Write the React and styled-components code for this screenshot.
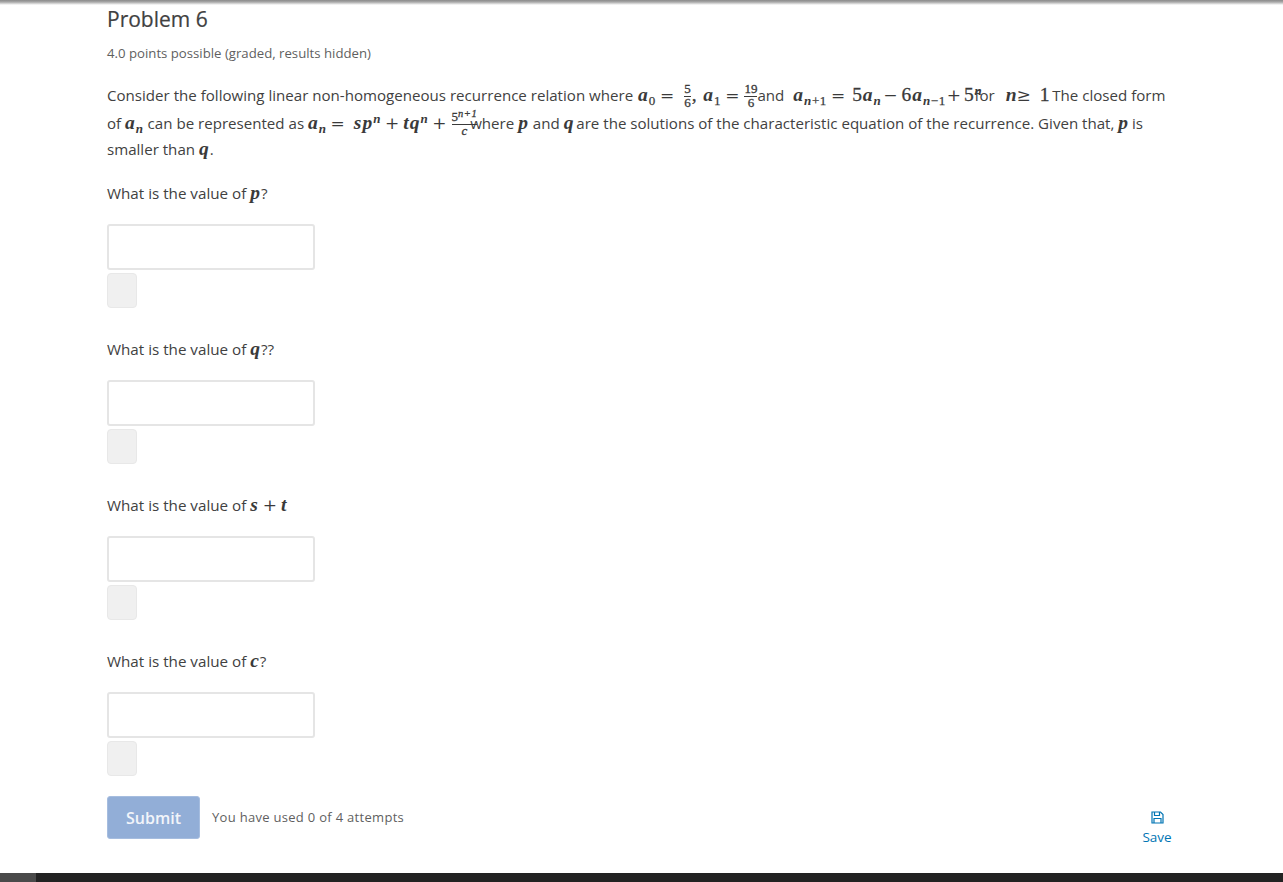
import React from "react";
import styled, { createGlobalStyle } from "styled-components";

const Global = createGlobalStyle`
  html, body { margin: 0; padding: 0; background: #fff; }
  body { font-family: "Open Sans", "Noto Sans", sans-serif; color: #414141; }
`;
const Page = styled.div`
  height: 882px; display: flex; flex-direction: column; overflow: hidden;
`;
const TopShadow = styled.div`
  height: 5px; flex: none;
  background: linear-gradient(#8a8a8a, #a8a8a8 40%, #fff);
`;
const Main = styled.main`
  flex: 1; padding: 0 0 0 107px; display: flex; flex-direction: column;
`;
const Title = styled.h3`
  margin: 0; font-size: 21px; line-height: 28px; font-weight: 500; color: #414141;
  -webkit-text-stroke: 0.2px #414141;
`;
const Meta = styled.div`
  margin-top: 11px; font-size: 13.2px; line-height: 18px; color: #5f5f5f;
`;
const Prose = styled.div`
  margin-top: 19px; font-size: 15.1px; color: #414141;
`;
const Line = styled.div`
  height: ${(p) => p.$h}px; line-height: ${(p) => p.$h}px; white-space: nowrap;
`;
const M = styled.span`
  font-family: "Liberation Serif", serif; font-size: 19.5px; font-style: italic;
  font-weight: 700; letter-spacing: 1px;
  color: #3a3a3a; margin: ${(p) => p.$m || "0"};
  sub, sup { font-size: 13px; line-height: 0; letter-spacing: 0.6px; }
  sub { vertical-align: -4px; }
  sup { vertical-align: 6px; }
`;
const Num1 = styled.span`
  font-family: "Liberation Serif", serif; font-size: 19.5px; font-weight: 400;
  -webkit-text-stroke: 0.3px #3a3a3a; letter-spacing: 0.8px;
  color: #3a3a3a; margin: ${(p) => p.$m || "0"};
`;
const Upright = styled.span`
  font-style: normal; font-weight: 400; -webkit-text-stroke: 0.25px #3a3a3a;
`;
const Op = styled.span`
  font-family: "DejaVu Serif", serif; font-size: 17px; font-style: normal; color: #3a3a3a;
  margin: ${(p) => p.$m || "0 4px"};
`;
const Frac = styled.span`
  display: inline-flex; flex-direction: column; align-items: center; vertical-align: middle;
  font-family: "Liberation Serif", serif; font-size: 13px; line-height: 12px;
  -webkit-text-stroke: 0.3px #3a3a3a;
  color: #3a3a3a; margin: ${(p) => p.$m || "0"}; position: relative; top: -1px;
  sup { font-size: 10.5px; line-height: 0; vertical-align: 4px; font-style: italic; letter-spacing: 0.5px; }
`;
const Num = styled.span`
  border-bottom: 1px solid #3a3a3a; padding: 0 0 1px;
`;
const Den = styled.span`
  font-style: ${(p) => (p.$i ? "italic" : "normal")};
`;
const Q = styled.section`
  margin-top: ${(p) => p.$mt}px; height: 156px;
`;
const Label = styled.div`
  font-size: 15.2px; line-height: 22px; color: #414141; white-space: nowrap;
`;
const Input = styled.input`
  display: block; box-sizing: border-box; width: 208px; height: 46px; margin-top: 20px; padding: 0;
  background: #fff; border: 2px solid #e5e5e5; border-radius: 3px; outline: none;
`;
const Status = styled.div`
  box-sizing: border-box; width: 30px; height: 35px; margin-top: 3px;
  background: #f0f0f0; border: 1px solid #e8e8e8; border-radius: 4px;
`;
const Footer = styled.div`
  display: flex; align-items: flex-start; margin-top: -10px;
`;
const Submit = styled.button`
  width: 93px; height: 43px; padding: 0; background: #92aed7; border: 1px solid #a6bddf; border-radius: 3px;
  color: #f2f5fa; font-family: inherit; font-size: 16px; font-weight: 600;
`;
const Attempts = styled.div`
  margin: 12px 0 0 12px; font-size: 13px; line-height: 18px; letter-spacing: 0.3px; color: #5f5f5f;
`;
const Save = styled.div`
  margin: 15px 111px 0 auto; width: 30px; display: flex; flex-direction: column; align-items: center;
  color: #0075b4; font-size: 13.5px; line-height: 18px;
  svg { display: block; margin-bottom: 4px; }
`;
const BottomBar = styled.div`
  height: 9px; flex: none; background: #222; display: flex;
`;
const Thumb = styled.div`
  width: 36px; background: #4a4a4a;
`;

const A = ({ s, m }) => <M $m={m}>a<sub>{s}</sub></M>;

const Question = ({ mt, children }) => (
  <Q $mt={mt}>
    <Label>{children}</Label>
    <Input type="text" aria-label="answer" />
    <Status />
  </Q>
);

export default function App() {
  return (
    <Page>
      <Global />
      <TopShadow />
      <Main>
        <Title>Problem 6</Title>
        <Meta>4.0 points possible (graded, results hidden)</Meta>
        <Prose>
          <Line $h={28}>
            Consider the following linear non-homogeneous recurrence relation where <A s={<Upright>0</Upright>} m="0 0 0 1px" />
            <Op>=</Op>
            <Frac $m="0 1px 0 6px"><Num>5</Num><Den>6</Den></Frac>
            <Num1 $m="0 6px 0 0">,</Num1>
            <A s={<Upright>1</Upright>} />
            <Op>=</Op>
            <Frac $m="0 0 0 1px"><Num>19</Num><Den>6</Den></Frac>
            and <A s={<>n<Upright>+1</Upright></>} m="0 0 0 5px" />
            <Op>=</Op>
            <Num1 $m="0 0 0 3px">5</Num1><M>a<sub>n</sub></M>
            <Op $m="0 4px 0 2px">−</Op>
            <Num1>6</Num1><M>a<sub>n<Upright>−1</Upright></sub></M>
            <Op $m="0 3px 0 1px">+</Op>
            <Num1>5</Num1><M $m="0 -8px 0 0"><sup>n</sup></M>
            for <M $m="0 0 0 7px">n</M>
            <Op $m="0 9px 0 -1px">≥</Op>
            <Num1 $m="0 -2px 0 0">1</Num1> The closed form
          </Line>
          <Line $h={28}>
            of <A s="n" /> can be represented as <A s="n" />
            <Op $m="0 9px 0 4px">=</Op>
            <M>sp<sup>n</sup></M>
            <Op>+</Op>
            <M>tq<sup>n</sup></M>
            <Op>+</Op>
            <Frac $m="0 -7px 0 1px"><Num>5<sup>n+1</sup></Num><Den $i>c</Den></Frac>
            where <M>p</M> and <M $m="0 -2px 0 0">q</M> are the solutions of the characteristic equation of the recurrence. Given that, <M $m="0 -1px 0 0">p</M> is
          </Line>
          <Line $h={23}>
            smaller than <M>q</M>.
          </Line>
        </Prose>
        <Question mt={22}>What is the value of <M>p</M>?</Question>
        <Question mt={0}>What is the value of <M>q</M>??</Question>
        <Question mt={0}>What is the value of <M>s</M><Op>+</Op><M>t</M></Question>
        <Question mt={0}>What is the value of <M>c</M>?</Question>
        <Footer>
          <Submit type="button">Submit</Submit>
          <Attempts>You have used 0 of 4 attempts</Attempts>
          <Save>
            <svg width="13" height="13" viewBox="0 0 13 13" fill="none" stroke="#0075b4" strokeWidth="1.2">
              <path d="M1 1h8.5L12 3.5V12H1z" />
              <path d="M3.5 1v3.5h5V1M3 12V7.5h7V12" />
            </svg>
            Save
          </Save>
        </Footer>
      </Main>
      <BottomBar><Thumb /></BottomBar>
    </Page>
  );
}
